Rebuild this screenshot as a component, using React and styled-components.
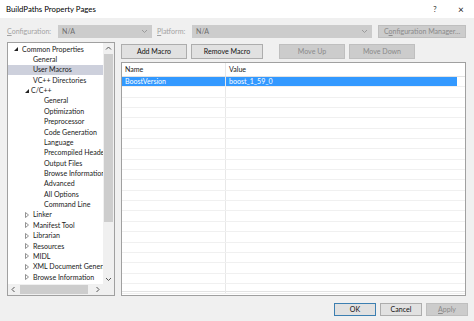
import React from 'react';
import styled, { createGlobalStyle } from 'styled-components';

const Global = createGlobalStyle`
  html, body { margin: 0; padding: 0; background: #f0f0f0; }
  body { font-family: "Lato", "Noto Sans", sans-serif; }
`;

const Window = styled.div`
  width: 474px;
  height: 321px;
  display: flex;
  flex-direction: column;
  background: #f0f0f0;
  overflow: hidden;
  font-size: 7.05px;
  color: #1a1a1a;
`;

const TitleBar = styled.div`
  height: 18px;
  flex: none;
  background: #fff;
  display: flex;
  align-items: center;
  padding-left: 6px;
  font-size: 7.8px;
  color: #000;
`;
const Title = styled.span`flex: 1;`;
const TitleBtn = styled.span`
  width: 26px;
  text-align: center;
  font-size: ${p => p.$size || 8}px;
  color: #222;
`;

const ConfigRow = styled.div`
  margin-top: 7px;
  height: 13px;
  flex: none;
  display: flex;
  align-items: center;
  padding-left: 7px;
`;
const Label = styled.span`
  width: ${p => p.$w}px;
  margin-left: ${p => p.$ml || 0}px;
  color: #a3a3a3;
`;
const U = styled.span`text-decoration: underline;`;
const Combo = styled.div`
  width: ${p => p.$w}px;
  height: 13px;
  box-sizing: border-box;
  background: #cccccc;
  color: #6d6d6d;
  display: flex;
  align-items: center;
  padding: 0 4px;
  justify-content: space-between;
`;
const Button = styled.div`
  width: ${p => p.$w}px;
  height: ${p => p.$h || 14}px;
  margin-left: ${p => p.$ml || 0}px;
  box-sizing: border-box;
  display: flex;
  align-items: center;
  justify-content: center;
  background: ${p => (p.$disabled ? '#cccccc' : '#e1e1e1')};
  border: 1px solid ${p => (p.$default ? '#3c7fb1' : p.$disabled ? '#bfbfbf' : '#adadad')};
  color: ${p => (p.$disabled ? '#8a8a8a' : '#111')};
  flex: none;
`;

const Main = styled.div`
  margin-top: 4px;
  height: 254px;
  flex: none;
  display: flex;
  padding-left: 7px;
  gap: 6px;
`;

const Tree = styled.div`
  width: 108px;
  box-sizing: border-box;
  border: 1px solid #a0a0a0;
  background: #fff;
  display: grid;
  grid-template-columns: 1fr 11px;
  grid-template-rows: 1fr 11px;
`;
const TreeBody = styled.div`
  overflow: hidden;
  padding-top: 1px;
`;
const TreeRow = styled.div`
  height: 10.36px;
  display: flex;
  align-items: center;
  white-space: nowrap;
  padding-left: ${p => p.$indent}px;
  background: ${p => (p.$selected ? '#cdd0dc' : 'transparent')};
`;
const Expander = styled.span`
  width: ${p => p.$w}px;
  flex: none;
  display: flex;
  align-items: center;
`;
const VScroll = styled.div`
  background: #f0f0f0;
  display: flex;
  flex-direction: column;
  align-items: center;
`;
const Arrow = styled.div`
  height: 10px;
  width: 11px;
  flex: none;
  display: flex;
  align-items: center;
  justify-content: center;
`;
const VThumb = styled.div`
  width: 9px;
  margin-top: 1px;
  height: 168px;
  background: #cdcdcd;
`;
const Spacer = styled.div`flex: 1;`;
const HScroll = styled.div`
  background: #f0f0f0;
  display: flex;
  align-items: center;
`;
const HThumb = styled.div`
  width: 68px;
  height: 9px;
  margin-left: 1px;
  background: #cdcdcd;
`;
const Corner = styled.div`background: #f0f0f0;`;

const Right = styled.div`
  width: 345px;
  display: flex;
  flex-direction: column;
`;
const ButtonRow = styled.div`
  margin-top: 2px;
  height: 15px;
  display: flex;
`;
const Grid = styled.div`
  margin-top: 3px;
  flex: 1;
  box-sizing: border-box;
  border: 1px solid #a0a0a0;
  background: #fff;
  overflow: hidden;
  box-shadow: inset 0 -3px 0 #fff, inset 0 -4px 0 #e3e3e3;
`;
const GridRow = styled.div`
  height: ${p => p.$h || 10.35}px;
  display: grid;
  grid-template-columns: 104px 231px 1fr;
  box-sizing: border-box;
  border-bottom: 1px solid ${p => (p.$header ? '#e3e3e3' : '#f0f0f0')};
`;
const Cell = styled.div`
  display: flex;
  align-items: center;
  padding-left: 3px;
  white-space: nowrap;
  background: ${p => (p.$selected ? '#3399ff' : 'transparent')};
  color: ${p => (p.$selected ? '#fff' : '#1a1a1a')};
  border-right: ${p => (p.$div ? '1px solid #e8e8e8' : 'none')};
`;

const Footer = styled.div`
  margin-top: 7px;
  display: flex;
  padding-left: 334px;
  gap: 4px;
`;

const Down = () => (
  <svg width="6" height="6" viewBox="0 0 6 6">
    <path d="M5 1 L5 5 L1 5 Z" fill="#222" />
  </svg>
);
const RightTri = () => (
  <svg width="6" height="6" viewBox="0 0 6 6">
    <path d="M1.5 0.5 L4.5 3 L1.5 5.5 Z" fill="none" stroke="#777" strokeWidth="0.8" />
  </svg>
);
const Chevron = ({ dir = 'down', color = '#888' }) => {
  const d = {
    down: 'M1 2 L3.5 4.5 L6 2',
    up: 'M1 4.5 L3.5 2 L6 4.5',
    left: 'M4.5 1 L2 3.5 L4.5 6',
    right: 'M2.5 1 L5 3.5 L2.5 6',
  }[dir];
  return (
    <svg width="7" height="7" viewBox="0 0 7 7">
      <path d={d} fill="none" stroke={color} strokeWidth="1" />
    </svg>
  );
};

const tree = [
  { t: 'Common Properties', lvl: 0, exp: 'open' },
  { t: 'General', lvl: 1 },
  { t: 'User Macros', lvl: 1, sel: true },
  { t: 'VC++ Directories', lvl: 1 },
  { t: 'C/C++', lvl: 1, exp: 'open' },
  { t: 'General', lvl: 2 },
  { t: 'Optimization', lvl: 2 },
  { t: 'Preprocessor', lvl: 2 },
  { t: 'Code Generation', lvl: 2 },
  { t: 'Language', lvl: 2 },
  { t: 'Precompiled Headers', lvl: 2 },
  { t: 'Output Files', lvl: 2 },
  { t: 'Browse Information', lvl: 2 },
  { t: 'Advanced', lvl: 2 },
  { t: 'All Options', lvl: 2 },
  { t: 'Command Line', lvl: 2 },
  { t: 'Linker', lvl: 1, exp: 'closed' },
  { t: 'Manifest Tool', lvl: 1, exp: 'closed' },
  { t: 'Librarian', lvl: 1, exp: 'closed' },
  { t: 'Resources', lvl: 1, exp: 'closed' },
  { t: 'MIDL', lvl: 1, exp: 'closed' },
  { t: 'XML Document Generator', lvl: 1, exp: 'closed' },
  { t: 'Browse Information', lvl: 1, exp: 'closed' },
  { t: 'Build Events', lvl: 1, exp: 'closed' },
];

function TreeItem({ item }) {
  if (item.lvl === 2) {
    return <TreeRow $indent={36}>{item.t}</TreeRow>;
  }
  if (item.lvl === 0) {
    return (
      <TreeRow $indent={5}>
        <Expander $w={9}><Down /></Expander>
        {item.t}
      </TreeRow>
    );
  }
  if (item.exp === 'open') {
    return (
      <TreeRow $indent={16}>
        <Expander $w={7}><Down /></Expander>
        {item.t}
      </TreeRow>
    );
  }
  if (item.exp === 'closed') {
    return (
      <TreeRow $indent={16}>
        <Expander $w={9}><RightTri /></Expander>
        {item.t}
      </TreeRow>
    );
  }
  return (
    <TreeRow $indent={25} $selected={item.sel}>
      {item.t}
    </TreeRow>
  );
}

export default function App() {
  const emptyRows = Array.from({ length: 20 });
  return (
    <>
      <Global />
      <Window>
        <TitleBar>
          <Title>BuildPaths Property Pages</Title>
          <TitleBtn $size={7.5}>?</TitleBtn>
          <TitleBtn $size={10}>×</TitleBtn>
        </TitleBar>
        <ConfigRow>
          <Label $w={51}>
            <U>C</U>onfiguration:
          </Label>
          <Combo $w={94}>
            N/A <Chevron color="#9a9a9a" />
          </Combo>
          <Label $w={35} $ml={5}>
            <U>P</U>latform:
          </Label>
          <Combo $w={180}>
            N/A <Chevron color="#9a9a9a" />
          </Combo>
          <Button $w={88} $h={13} $ml={6} $disabled>
            C<U>o</U>nfiguration Manager...
          </Button>
        </ConfigRow>
        <Main>
          <Tree>
            <TreeBody>
              {tree.map((it, i) => (
                <TreeItem key={i} item={it} />
              ))}
            </TreeBody>
            <VScroll>
              <Arrow>
                <Chevron dir="up" color="#555" />
              </Arrow>
              <VThumb />
              <Spacer />
              <Arrow>
                <Chevron dir="down" color="#555" />
              </Arrow>
            </VScroll>
            <HScroll>
              <Arrow>
                <Chevron dir="left" color="#555" />
              </Arrow>
              <HThumb />
              <Spacer />
              <Arrow>
                <Chevron dir="right" color="#555" />
              </Arrow>
            </HScroll>
            <Corner />
          </Tree>
          <Right>
            <ButtonRow>
              <Button $w={66} $h={15}>Add Macro</Button>
              <Button $w={72} $h={15} $ml={4}>Remove Macro</Button>
              <Button $w={66} $h={15} $ml={16} $disabled>Move Up</Button>
              <Button $w={66} $h={15} $ml={4} $disabled>Move Down</Button>
            </ButtonRow>
            <Grid>
              <GridRow $header $h={14}>
                <Cell $div>Name</Cell>
                <Cell>Value</Cell>
                <Cell />
              </GridRow>
              <GridRow>
                <Cell $selected $div>BoostVersion</Cell>
                <Cell $selected>boost_1_59_0</Cell>
                <Cell />
              </GridRow>
              {emptyRows.map((_, i) => (
                <GridRow key={i}>
                  <Cell $div />
                  <Cell />
                  <Cell />
                </GridRow>
              ))}
            </Grid>
          </Right>
        </Main>
        <Footer>
          <Button $w={42} $h={13} $default>OK</Button>
          <Button $w={42} $h={13}>Cancel</Button>
          <Button $w={42} $h={13} $disabled>
            <U>A</U>pply
          </Button>
        </Footer>
      </Window>
    </>
  );
}
